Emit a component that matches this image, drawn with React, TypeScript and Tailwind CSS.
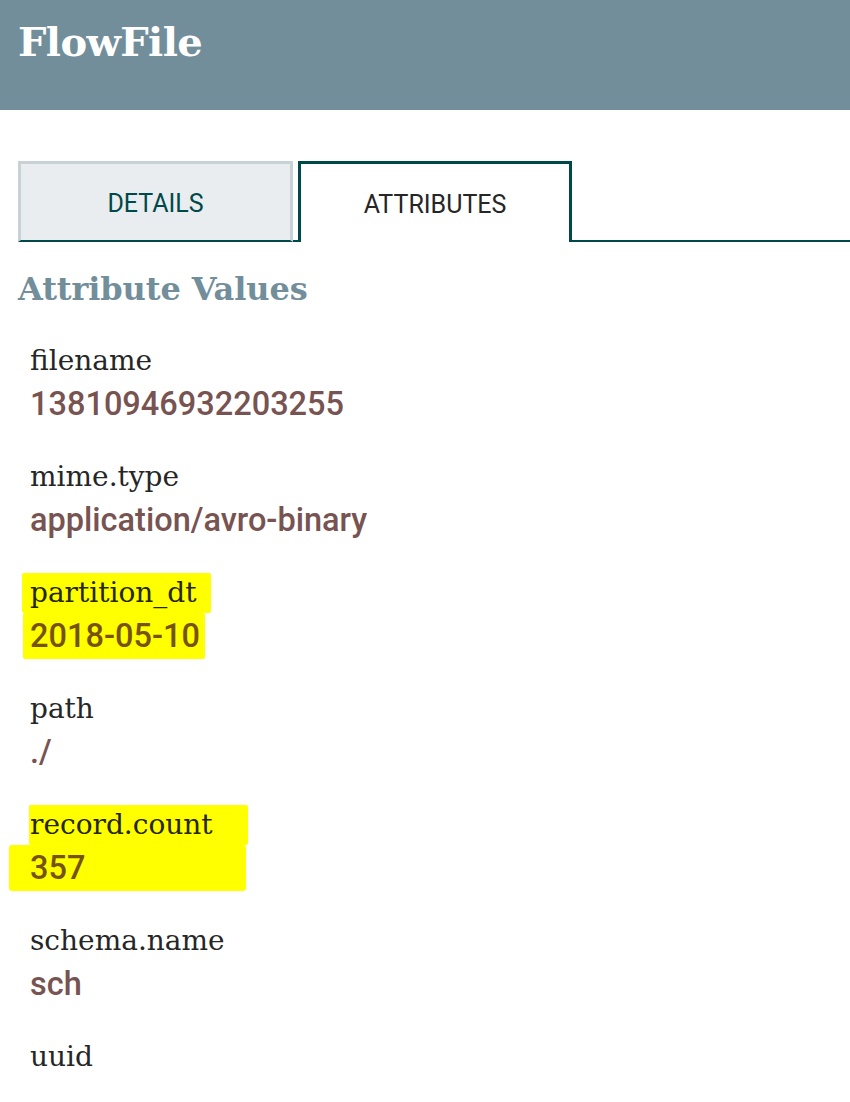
import React from 'react';

type Attr = {
    name: string;
    value: string;
    mark?: { label: string; value: string };
};

// highlighter marks: classes for label and value spans
const attributes: Attr[] = [
    { name: 'filename', value: '13810946932203255' },
    { name: 'mime.type', value: 'application/avro-binary' },
    {
        name: 'partition_dt',
        value: '2018-05-10',
        mark: {
            label: 'inline-block bg-[#ffff00] text-[#262600] -ml-[8px] pl-[8px] w-[189px] rounded-[2px]',
            value: 'inline-block bg-[#ffff00] text-[#775300] -ml-[7px] pl-[7px] w-[182px] rounded-[2px]',
        },
    },
    { name: 'path', value: './' },
    {
        name: 'record.count',
        value: '357',
        mark: {
            label: 'inline-block bg-[#ffff00] text-[#262600] -ml-[1px] pl-[1px] w-[219px] rounded-[2px]',
            value: 'inline-block bg-[#ffff00] text-[#775300] -ml-[21px] pl-[21px] w-[237px] rounded-[3px]',
        },
    },
    { name: 'schema.name', value: 'sch' },
    { name: 'uuid', value: '' },
];

const slab = "font-['DejaVu_Serif','Liberation_Serif',serif]";
const sans = "font-['Roboto','Liberation_Sans',sans-serif]";

const App = () => {
    return (
        <div className="w-full min-h-screen bg-white">
            {/* title bar */}
            <div className="h-[110px] bg-[#728e9b] pl-[18px] pt-[16px]">
                <h1 className={`${slab} text-[40px] leading-[52px] font-bold text-white tracking-[-0.6px]`}>FlowFile</h1>
            </div>

            {/* tabs */}
            <div className="flex items-end pl-[18px] mt-[51px]">
                <div className="w-[275px] h-[81px] pt-[3px] bg-[#e9edef] border-x-[3px] border-t-[3px] border-[#c7d2d7] border-b-2 border-b-[#004849] flex items-center justify-center">
                    <span className={`${sans} text-[25px] text-[#004849]`}>DETAILS</span>
                </div>
                <div className="w-[5px] border-b-2 border-[#004849]" />
                <div className="w-[274px] h-[81px] pt-[3px] border-x-[3px] border-t-[3px] border-[#004849] bg-white flex items-center justify-center">
                    <span className={`${sans} text-[25px] text-[#262626]`}>ATTRIBUTES</span>
                </div>
                <div className="flex-1 border-b-2 border-[#004849]" />
            </div>

            {/* attribute list */}
            <div className="px-[18px]">
                <h2 className={`${slab} mt-[25px] text-[32px] leading-[44px] font-bold text-[#728e9b] tracking-[-0.1px]`}>Attribute Values</h2>
                <div className="mt-[30px] pl-[12px] flex flex-col gap-[30px]">
                    {attributes.map(attr => (
                        <div key={attr.name} className="flex flex-col items-start">
                            <div className={`${slab} text-[28px] leading-[40px] text-[#262626]`}>
                                <span className={attr.mark ? attr.mark.label : ''}>{attr.name}</span>
                            </div>
                            <div className={`${sans} text-[32.5px] leading-[46px] font-medium text-[#775351]`}>
                                <span className={attr.mark ? attr.mark.value : ''}>{attr.value}</span>
                            </div>
                        </div>
                    ))}
                </div>
            </div>
        </div>
    );
};

export default App;
